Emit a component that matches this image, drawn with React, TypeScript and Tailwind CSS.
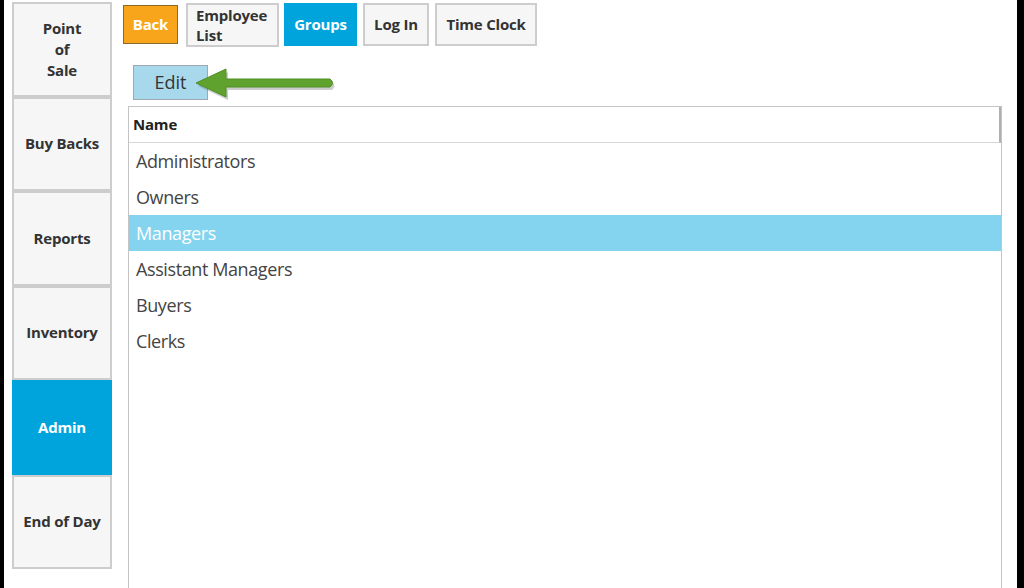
import React from "react"

const sideItems = [
  { label: ["Point", "of", "Sale"], active: false },
  { label: ["Buy Backs"], active: false },
  { label: ["Reports"], active: false },
  { label: ["Inventory"], active: false },
  { label: ["Admin"], active: true },
  { label: ["End of Day"], active: false },
]

const groups = ["Administrators", "Owners", "Managers", "Assistant Managers", "Buyers", "Clerks"]

function EditArrow() {
  return (
    <svg width="150" height="42" viewBox="0 0 150 42" className="absolute left-[190px] top-[63px]">
      {/* shadow */}
      <g opacity="0.3" transform="translate(2,3)">
        <path d="M6 20 L36 6 L36 16 L140 16 Q145 20 140 24 L36 24 L36 34 Z" fill="#555" />
      </g>
      <path d="M6 20 L36 6 L36 16 L140 16 Q145 20 140 24 L36 24 L36 34 Z" fill="#5fa22e" stroke="#519025" strokeWidth="1" strokeLinejoin="round" />
    </svg>
  )
}

export default function App() {
  return (
    <div
      className="w-[1024px] h-[588px] flex bg-white overflow-hidden relative"
      style={{ fontFamily: '"Open Sans", "Noto Sans", sans-serif' }}
    >
      <div className="w-[4px] bg-black shrink-0" />

      {/* Left nav */}
      <div className="flex flex-col pl-[8px] pt-[2px] shrink-0">
        {sideItems.map((item, i) => (
          <div
            key={i}
            className={`w-[100px] h-[94.5px] flex flex-col items-center justify-center border-2 text-[15px] font-bold leading-[21px] tracking-[-0.2px] ${
              item.active
                ? "bg-[#00a4dc] border-[#00a4dc] text-white"
                : "bg-[#f6f6f6] border-[#cdcdcd] text-[#333]"
            }`}
          >
            {item.label.map((l) => (
              <span key={l} className="whitespace-nowrap">{l}</span>
            ))}
          </div>
        ))}
      </div>

      {/* Main */}
      <div className="flex flex-col ml-[11px] pt-[3px] w-[878px] shrink-0">
        <div className="flex items-start h-[43px] text-[15px] font-bold tracking-[-0.2px]">
          <div className="mt-[2px] w-[55px] h-[39px] flex items-center justify-center bg-[#f8a51c] border border-[#8a6a2a] text-white">
            Back
          </div>
          <div className="ml-[8px] w-[93px] h-[44px] flex flex-col justify-center pl-[8px] leading-[20px] bg-[#f6f6f6] border-2 border-[#cdcdcd] text-[#333]">
            <span>Employee</span>
            <span>List</span>
          </div>
          <div className="ml-[5px] w-[73px] h-[43px] flex items-center justify-center bg-[#00a4dc] text-white">
            Groups
          </div>
          <div className="ml-[6px] w-[66px] h-[43px] flex items-center justify-center bg-[#f6f6f6] border-2 border-[#cdcdcd] text-[#333]">
            Log In
          </div>
          <div className="ml-[6px] w-[102px] h-[43px] flex items-center justify-center bg-[#f6f6f6] border-2 border-[#cdcdcd] text-[#333]">
            Time Clock
          </div>
        </div>

        <div className="flex mt-[19px] ml-[10px]">
          <div className="w-[75px] h-[35px] flex items-center justify-center bg-[#a8d8ec] border border-[#a0a8ae] text-[18px] text-[#333]">
            Edit
          </div>
        </div>

        <div className="ml-[5px] mt-[6px] w-[874px] flex-1 border border-[#c4c4c4] border-b-0 bg-white">
          <div className="h-[36px] flex items-center pl-[4px] border-b border-[#d6d6d6] border-r-2 border-r-[#b0b0b0] text-[15px] font-bold text-[#222] tracking-[-0.2px]">
            Name
          </div>
          {groups.map((g) => (
            <div
              key={g}
              className={`h-[36px] flex items-center pl-[7px] text-[18px] font-medium tracking-[-0.4px] ${
                g === "Managers" ? "bg-[#84d4f0] text-white" : "text-[#444]"
              }`}
            >
              {g}
            </div>
          ))}
        </div>
      </div>

      <div className="flex-1" />
      <div className="w-[7px] bg-black shrink-0" />

      <EditArrow />
    </div>
  )
}
